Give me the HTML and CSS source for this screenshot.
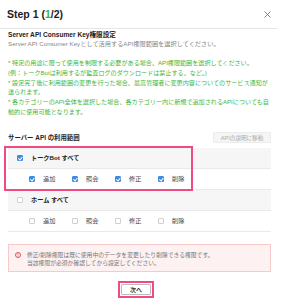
FILE: index.html
```html
<!DOCTYPE html>
<html lang="ja">
<head>
    <meta charset="UTF-8">
    <meta name="viewport" content="width=device-width, initial-scale=1.0">
    <title>Step 1 (1/2)</title>
    <link rel="stylesheet" href="styles.css">
</head>
<body>

    <div class="header">
        <div class="title">Step 1 (<span class="green">1</span>/2)</div>
        <svg class="close" width="7" height="7" viewBox="0 0 7 7"><path d="M0.5 0.5 L6.5 6.5 M6.5 0.5 L0.5 6.5" stroke="#777" stroke-width="0.9" fill="none"/></svg>
    </div>

    <div class="content">
        <h2>Server API Consumer Key権限設定</h2>
        <p class="desc">Server API Consumer Keyとして活用するAPI権限範囲を選択してください。</p>
        <div class="notes">
            <p>* 特定の用途に限って使用を制限する必要がある場合、API権限範囲を選択してください。<br>(例：トークBotは利用するが監査ログのダウンロードは禁止する、など。)</p>
            <p>* 設定完了後に利用範囲の変更を行った場合、最高管理者に変更内容についてのサービス通知が<br>送られます。</p>
            <p>* 各カテゴリーのAPI全体を選択した場合、各カテゴリー内に新規で追加されるAPIについても自<br>動的に使用可能となります。</p>
        </div>

        <div class="scope-head">
            <h3>サーバー API の利用範囲</h3>
            <button class="link-btn">APIの説明に移動</button>
        </div>

        <div class="table">
            <div class="highlight"></div>
            <div class="row all">
                <span class="check on"></span><span class="cat">トークBot すべて</span>
            </div>
            <div class="row items">
                <label class="item"><span class="check on"></span>追加</label>
                <label class="item"><span class="check on"></span>照会</label>
                <label class="item"><span class="check on"></span>修正</label>
                <label class="item"><span class="check on"></span>削除</label>
            </div>
            <div class="row all">
                <span class="check"></span><span class="cat">ホーム すべて</span>
            </div>
            <div class="row items">
                <label class="item"><span class="check"></span>追加</label>
                <label class="item"><span class="check"></span>照会</label>
                <label class="item"><span class="check"></span>修正</label>
                <label class="item"><span class="check"></span>削除</label>
            </div>
        </div>

        <div class="warning">
            <span class="warn-icon">!</span>
            <p>修正/削除権限は既に使用中のデータを変更したり削除できる権限です。<br>当該権限が必須か確認してから設定してください。</p>
        </div>

        <div class="footer">
            <div class="next-wrap"><button class="next">次へ</button></div>
        </div>
    </div>

</body>
</html>
```

FILE: styles.css
```css
body {
    font-family: 'Liberation Sans', 'Noto Sans CJK JP', sans-serif;
    margin: 0;
    padding: 0;
    background-color: #fff;
    color: #333;
    width: 288px;
}
.green {
    color: #3fb53a;
}
.header {
    width: 277px;
    height: 29px;
    box-sizing: border-box;
    padding: 0 6px 0 7px;
    border-bottom: 1px solid #e6e6e6;
    display: flex;
    justify-content: space-between;
    align-items: center;
}
.title {
    font-size: 10.5px;
    font-weight: bold;
    color: #222;
}
.close {
    display: block;
}
.content {
    padding: 0 16px 0 8px;
}
h2 {
    font-size: 6.6px;
    line-height: 9px;
    margin: 0;
    margin-top: 1px;
    color: #222;
}
.desc {
    font-size: 6.2px;
    line-height: 10px;
    margin: 0;
    color: #888;
}
.notes {
    margin-top: 9px;
    font-size: 6.1px;
    line-height: 9.8px;
    color: #3fb53a;
    white-space: nowrap;
}
.notes p {
    margin: 0;
}
.scope-head {
    margin-top: 15px;
    height: 12px;
    margin-right: 1px;
    display: flex;
    justify-content: space-between;
    align-items: center;
}
h3 {
    font-size: 6.4px;
    margin: 0;
    color: #222;
}
.link-btn {
    font-family: inherit;
    width: 58px;
    height: 11px;
    padding: 0;
    font-size: 5.6px;
    color: #aaa;
    background-color: #f5f5f5;
    border: 1px solid #ececec;
    border-radius: 1px;
}
.table {
    position: relative;
    margin-top: 4px;
    margin-right: 1px;
}
.highlight {
    position: absolute;
    left: -4px;
    top: -2px;
    width: 189px;
    height: 45px;
    box-sizing: border-box;
    border: 2px solid #ef4a82;
}
.row {
    height: 21px;
    box-sizing: border-box;
    border-bottom: 1px solid #e9e9e9;
    display: flex;
    align-items: center;
    font-size: 6.2px;
}
.row.all {
    background-color: #f6f6f6;
    padding-left: 9px;
}
.row.items {
    padding-left: 21px;
}
.cat {
    font-weight: bold;
    color: #222;
    margin-left: 8px;
}
.item {
    display: flex;
    align-items: center;
    width: 43px;
    color: #444;
}
.item .check {
    margin-right: 8px;
}
.check {
    display: inline-block;
    width: 6px;
    height: 6px;
    box-sizing: border-box;
    border: 1px solid #cfcfcf;
    border-radius: 1px;
    background-color: #fff;
    position: relative;
}
.check.on {
    background-color: #3b8de4;
    border-color: #3b8de4;
}
.check.on::after {
    content: "";
    position: absolute;
    left: 1.2px;
    top: 0.2px;
    width: 1.6px;
    height: 2.6px;
    border-right: 0.8px solid #fff;
    border-bottom: 0.8px solid #fff;
    transform: rotate(40deg);
}
.warning {
    margin-top: 12px;
    margin-right: 1px;
    padding: 6px 8px 4px 6px;
    background-color: #fdf1f1;
    border: 1px solid #f6caca;
    display: flex;
    align-items: flex-start;
}
.warn-icon {
    width: 6px;
    height: 6px;
    box-sizing: border-box;
    border: 0.8px solid #e5534b;
    border-radius: 50%;
    color: #e5534b;
    font-size: 4.6px;
    line-height: 5px;
    text-align: center;
    font-weight: bold;
    margin-top: 1px;
    margin-right: 6px;
    flex-shrink: 0;
}
.warning p {
    margin: 0;
    font-size: 5.8px;
    line-height: 8px;
    color: #777;
}
.footer {
    margin-top: 9px;
    display: flex;
    justify-content: center;
    padding-right: 8px;
}
.next-wrap {
    border: 2px solid #ef4a82;
    padding: 1px;
    background-color: #fff;
}
.next {
    font-family: inherit;
    display: block;
    width: 30px;
    height: 11px;
    padding: 0;
    font-size: 6px;
    font-weight: bold;
    color: #333;
    background-color: #fff;
    border: 1px solid #bbb;
    border-radius: 1px;
}
```
